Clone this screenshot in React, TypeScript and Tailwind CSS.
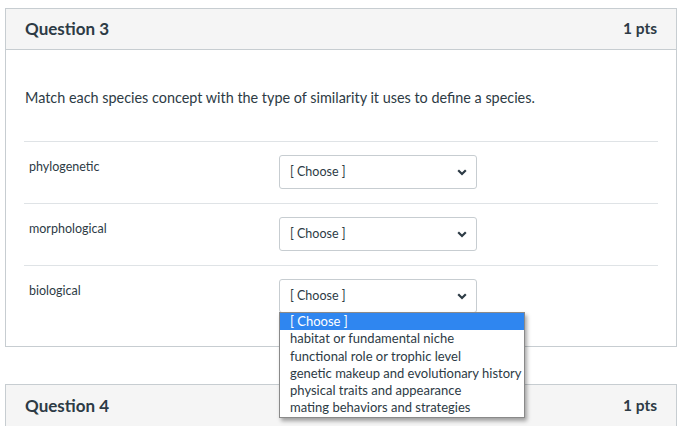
import React from "react";

const options = [
  "[ Choose ]",
  "habitat or fundamental niche",
  "functional role or trophic level",
  "genetic makeup and evolutionary history",
  "physical traits and appearance",
  "mating behaviors and strategies",
];

const rows = ["phylogenetic", "morphological", "biological"];

function Chevron() {
  return (
    <svg width="10" height="7" viewBox="0 0 10 7" className="text-[#2d3b45]">
      <path d="M1.2 1.2 L5 5 L8.8 1.2" fill="none" stroke="currentColor" strokeWidth="2.2" />
    </svg>
  );
}

function FakeSelect({ open }: { open?: boolean }) {
  return (
    <div className="relative">
      <div className="flex h-[34px] w-[198px] items-center justify-between rounded-[3px] border border-[#c7cdd1] bg-white pl-[10px] pr-[9px] text-[12.5px] text-[#2d3b45]">
        <span>[ Choose ]</span>
        <Chevron />
      </div>
      {open && (
        <ul className="absolute left-0 top-[33px] z-10 w-[246px] border border-[#8a8a8a] bg-white text-[13px] leading-[17.3px] text-[#2d3b45] shadow-[2px_3px_4px_rgba(0,0,0,0.35)]">
          {options.map((o, i) => (
            <li
              key={o}
              className={`pl-[10px] whitespace-nowrap ${i === 0 ? "bg-[#2f86f0] text-white" : ""}`}
            >
              {o}
            </li>
          ))}
        </ul>
      )}
    </div>
  );
}

export default function App() {
  return (
    <div
      className="min-h-[426px] overflow-hidden bg-white pl-[5px] pt-[8px] text-[#2d3b45]"
      style={{ fontFamily: "Lato, 'Open Sans', sans-serif" }}
    >
      {/* Question 3 */}
      <div className="w-[672px] border border-[#c7cdd1]">
        <div className="flex h-[41px] items-center justify-between border-b border-[#c7cdd1] bg-[#f5f5f5] px-[19px]">
          <h2 className="text-[17px] font-bold">Question 3</h2>
          <span className="text-[15.5px] font-bold">1 pts</span>
        </div>
        <div className="px-[18px] pb-[19px]">
          <p className="pt-[37px] pb-[33px] pl-[1px] text-[14.4px] leading-[21px]">
            Match each species concept with the type of similarity it uses to define a species.
          </p>
          {rows.map((r, i) => (
            <div key={r} className="flex h-[62px] border-t border-[#dfe3e6]">
              <div className="w-[255px] pl-[5px] pt-[16px] text-[12.5px]">{r}</div>
              <div className="pt-[13px]">
                <FakeSelect open={i === 2} />
              </div>
            </div>
          ))}
        </div>
      </div>

      {/* Question 4 */}
      <div className="mt-[37px] w-[672px] border border-[#c7cdd1]">
        <div className="flex h-[41px] items-center justify-between bg-[#f5f5f5] px-[19px]">
          <h2 className="text-[17px] font-bold">Question 4</h2>
          <span className="text-[15.5px] font-bold">1 pts</span>
        </div>
      </div>
    </div>
  );
}
